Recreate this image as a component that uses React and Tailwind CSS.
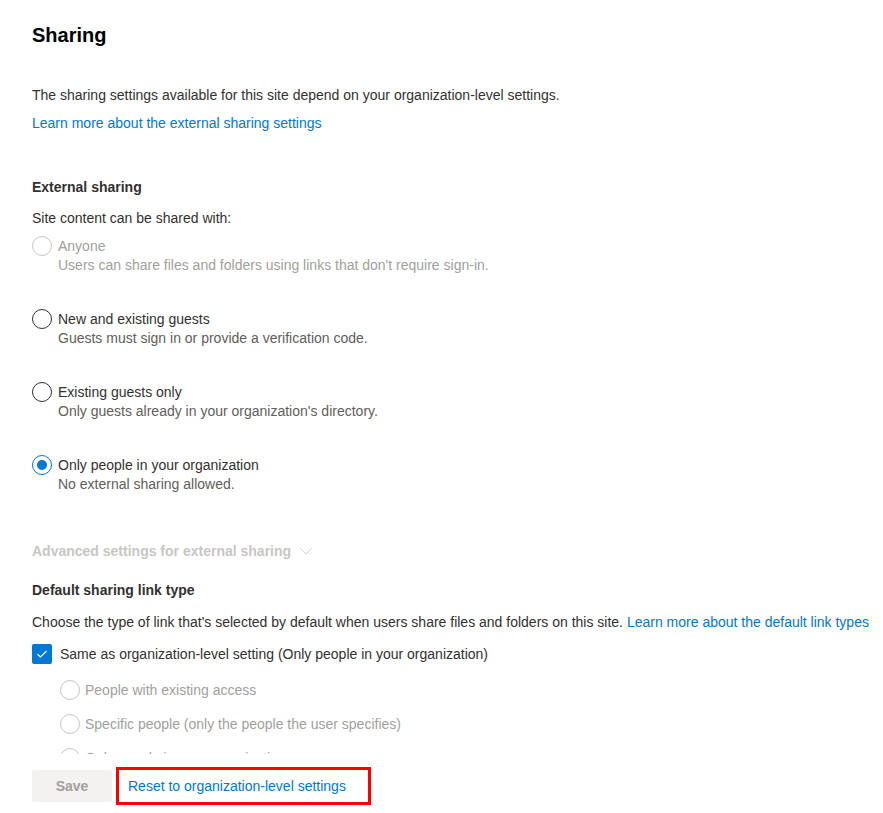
import React from "react";

const font = { fontFamily: '"Segoe UI", "Liberation Sans", Arial, sans-serif' };

function Radio({ state = "off" }) {
  if (state === "disabled") {
    return <span className="inline-block w-5 h-5 rounded-full border border-[#c8c6c4] bg-white shrink-0" />;
  }
  if (state === "on") {
    return (
      <span className="flex items-center justify-center w-5 h-5 rounded-full border border-[#0078d4] bg-white shrink-0">
        <span className="w-[10px] h-[10px] rounded-full bg-[#0078d4]" />
      </span>
    );
  }
  return <span className="inline-block w-5 h-5 rounded-full border border-[#323130] bg-white shrink-0" />;
}

function Option({ label, desc, state, disabled }) {
  const labelColor = disabled ? "text-[#a19f9d]" : "text-[#323130]";
  const descColor = disabled ? "text-[#a19f9d]" : "text-[#605e5c]";
  return (
    <div className="flex flex-col">
      <div className="flex items-center h-5">
        <Radio state={state} />
        <span className={`ml-[6px] text-[14px] leading-5 ${labelColor}`}>{label}</span>
      </div>
      <div className={`pl-[26px] text-[14px] leading-[19px] ${descColor}`}>{desc}</div>
    </div>
  );
}

function SubRadio({ label }) {
  return (
    <div className="flex items-center h-5">
      <Radio state="disabled" />
      <span className="ml-[5px] text-[14px] leading-5 text-[#a19f9d]">{label}</span>
    </div>
  );
}

export default function App() {
  return (
    <div className="w-[883px] h-[813px] bg-white overflow-hidden text-[#323130]" style={font}>
      <div className="h-[754px] overflow-hidden pl-8 pr-4">
        <h1 className="pt-[21px] text-[20px] leading-7 font-semibold text-[#000000]">Sharing</h1>
        <p className="mt-9 text-[14px] leading-5">
          The sharing settings available for this site depend on your organization-level settings.
        </p>
        <a className="block mt-2 text-[14px] leading-5 text-[#0078d4]">Learn more about the external sharing settings</a>

        <div className="mt-11 text-[14px] leading-5 font-semibold">External sharing</div>
        <div className="mt-[11px] text-[14px] leading-5">Site content can be shared with:</div>

        <div className="mt-2 flex flex-col gap-[34px]">
          <Option
            state="disabled"
            disabled
            label="Anyone"
            desc="Users can share files and folders using links that don't require sign-in."
          />
          <Option state="off" label="New and existing guests" desc="Guests must sign in or provide a verification code." />
          <Option state="off" label="Existing guests only" desc="Only guests already in your organization's directory." />
          <Option state="on" label="Only people in your organization" desc="No external sharing allowed." />
        </div>

        <div className="mt-[47px] flex items-center text-[14px] leading-5 font-semibold text-[#c8c6c4]">
          <span>Advanced settings for external sharing</span>
          <svg className="ml-2" width="14" height="14" viewBox="0 0 16 16" fill="none">
            <path d="M1.5 5 L8 11.5 L14.5 5" stroke="#c8c6c4" strokeWidth="1" />
          </svg>
        </div>

        <div className="mt-[19px] text-[14px] leading-5 font-semibold">Default sharing link type</div>
        <div className="mt-3 text-[14px] leading-5 whitespace-nowrap">
          Choose the type of link that's selected by default when users share files and folders on this site.{" "}
          <a className="text-[#0078d4]">Learn more about the default link types</a>
        </div>

        <div className="mt-3 flex items-center h-5">
          <span className="flex items-center justify-center w-5 h-5 rounded-[2px] bg-[#0078d4] shrink-0">
            <svg width="12" height="12" viewBox="0 0 12 12" fill="none">
              <path d="M1.5 6.2 L4.5 9 L10.5 3" stroke="white" strokeWidth="1.2" />
            </svg>
          </span>
          <span className="ml-2 text-[14px] leading-5">
            Same as organization-level setting (Only people in your organization)
          </span>
        </div>

        <div className="mt-4 pl-7 flex flex-col gap-[14px]">
          <SubRadio label="People with existing access" />
          <SubRadio label="Specific people (only the people the user specifies)" />
          <SubRadio label="Only people in your organization" />
          <SubRadio label="Anyone with the link" />
        </div>
      </div>

      <div className="pl-8 mt-[13px] flex items-center">
        <button className="w-20 h-8 rounded-[2px] bg-[#f3f2f1] text-[#a19f9d] text-[14px] font-semibold">Save</button>
        <div className="ml-1 w-[255px] h-[38px] border-[3px] border-[#ff0000] flex items-center pl-[9px]">
          <a className="text-[14px] leading-5 text-[#0078d4]">Reset to organization-level settings</a>
        </div>
      </div>
    </div>
  );
}
